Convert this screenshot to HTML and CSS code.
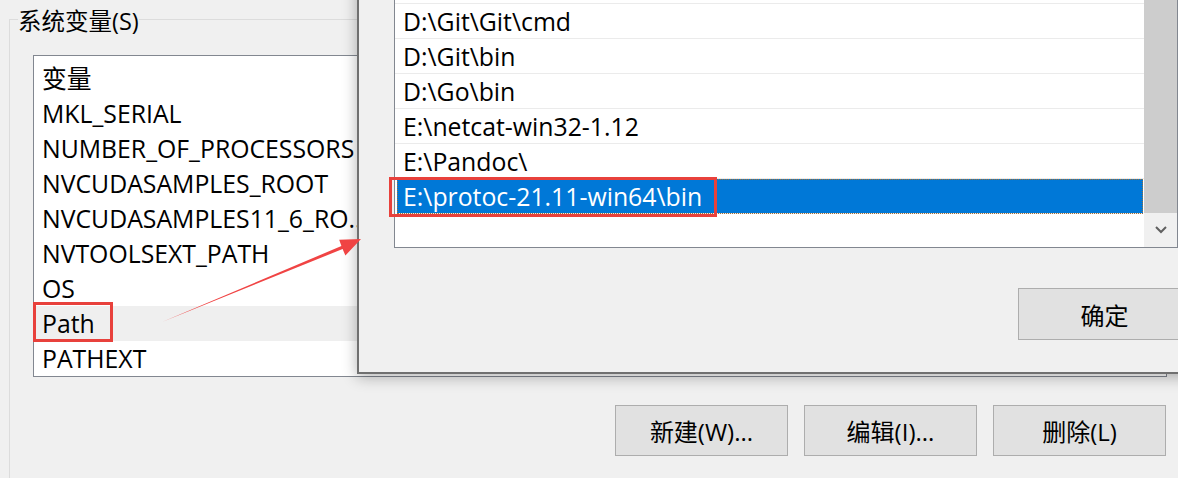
FILE: index.html
```html
<!DOCTYPE html>
<html lang="zh-CN">
<head>
  <meta charset="UTF-8">
  <title>环境变量</title>
  <link rel="stylesheet" href="styles.css">
</head>
<body>

  <div class="window">
    <div class="group">
      <div class="group-title">系统变量(S)</div>
      <div class="var-list">
        <div class="var-row">变量</div>
        <div class="var-row">MKL_SERIAL</div>
        <div class="var-row">NUMBER_OF_PROCESSORS</div>
        <div class="var-row">NVCUDASAMPLES_ROOT</div>
        <div class="var-row">NVCUDASAMPLES11_6_RO...</div>
        <div class="var-row">NVTOOLSEXT_PATH</div>
        <div class="var-row">OS</div>
        <div class="var-row current"><span class="mark mark-path">Path</span></div>
        <div class="var-row">PATHEXT</div>
      </div>
      <div class="actions">
        <button>新建(W)...</button>
        <button>编辑(I)...</button>
        <button>删除(L)</button>
      </div>
    </div>
  </div>

  <div class="dialog">
    <div class="path-box">
      <div class="path-rows">
        <div class="path-row first">D:\Anaconda3\Library\mingw-w64\bin</div>
        <div class="path-row">D:\Git\Git\cmd</div>
        <div class="path-row">D:\Git\bin</div>
        <div class="path-row">D:\Go\bin</div>
        <div class="path-row">E:\netcat-win32-1.12</div>
        <div class="path-row">E:\Pandoc\</div>
        <div class="path-row selected"><span class="mark mark-sel">E:\protoc-21.11-win64\bin</span></div>
      </div>
      <div class="scrollbar">
        <div class="thumb"></div>
        <div class="arrow-btn">
          <svg width="12" height="8" viewBox="0 0 12 8"><polyline points="1,1 6,6 11,1" fill="none" stroke="#606060" stroke-width="2"/></svg>
        </div>
      </div>
    </div>
    <div class="dialog-actions">
      <button class="ok">确定</button>
    </div>
  </div>

  <svg class="note-arrow" width="1178" height="478" viewBox="0 0 1178 478">
    <polygon points="162,322 342.6,249 345.4,255.5 361,239 339.2,239.8 341.4,246" fill="#f04444"/>
  </svg>

</body>
</html>
```

FILE: styles.css
```css
body {
  margin: 0;
  background: #f0f0f0;
  font-family: "Open Sans", "Noto Sans CJK SC", sans-serif;
  font-size: 24.8px;
  color: #000;
  overflow: hidden;
}

.window {
  padding: 19px 0 0 9px;
}

.group {
  border-left: 1px solid #dcdcdc;
  border-top: 1px solid #dcdcdc;
  height: 470px;
  padding-left: 23px;
  display: flex;
  flex-direction: column;
  align-items: flex-start;
}

.group-title {
  margin: -13px 0 0 -15px;
  padding: 0;
  background: #f0f0f0;
  font-size: 23.5px;
  line-height: 28px;
}

.var-list {
  margin-top: 20px;
  width: 1134px;
  height: 322px;
  box-sizing: border-box;
  border: 1px solid #828790;
  background: #fff;
  padding-top: 5px;
}

.var-row {
  height: 35px;
  line-height: 35px;
  padding-left: 8px;
  white-space: nowrap;
}

.var-row.current {
  background: #efefef;
}

.actions {
  width: 1133px;
  display: flex;
  justify-content: flex-end;
  gap: 16px;
  margin-top: 28px;
}

button {
  font: inherit;
  font-size: 24px;
  color: #000;
  background: #e1e1e1;
  border: 1px solid #adadad;
  padding: 0;
}

.actions button {
  width: 173px;
  height: 51px;
}

.dialog {
  position: absolute;
  left: 357px;
  top: -40px;
  width: 900px;
  height: 414px;
  box-sizing: border-box;
  border: 2px solid #707070;
  background: #f0f0f0;
  box-shadow: 0 3px 14px rgba(0, 0, 0, 0.3);
}

.path-box {
  margin: 4px 0 0 35px;
  width: 784px;
  height: 282px;
  box-sizing: border-box;
  border: 1px solid #828790;
  background: #fff;
  display: flex;
}

.path-rows {
  flex: 1;
  padding-top: 2px;
}

.path-row {
  height: 34px;
  line-height: 34px;
  border-bottom: 1px solid #ebebeb;
  padding-left: 8px;
  white-space: nowrap;
  overflow: hidden;
}

.path-row.first {
  line-height: 30px;
}

.path-row.selected {
  background: #0078d7;
  color: #fff;
  margin: 0 1px 0 2px;
  padding-left: 6px;
  outline: 1px dotted #a0703a;
  outline-offset: -1px;
  overflow: visible;
}

.scrollbar {
  width: 33px;
  display: flex;
  flex-direction: column;
}

.thumb {
  flex: 1;
  background: #cdcdcd;
}

.arrow-btn {
  height: 34px;
  background: #f0f0f0;
  display: flex;
  align-items: center;
  justify-content: center;
}

.dialog-actions {
  margin: 40px 0 0 659px;
}

.ok {
  width: 173px;
  height: 52px;
}

.mark {
  position: relative;
  display: inline-block;
}

.mark::after {
  content: "";
  position: absolute;
  border: 3px solid #e8413c;
}

.mark-path::after {
  left: -9px;
  right: -18px;
  top: -4px;
  bottom: -1px;
}

.mark-sel::after {
  left: -14px;
  right: -15px;
  top: -2px;
  bottom: -4px;
}

.note-arrow {
  position: absolute;
  left: 0;
  top: 0;
  pointer-events: none;
}
```
